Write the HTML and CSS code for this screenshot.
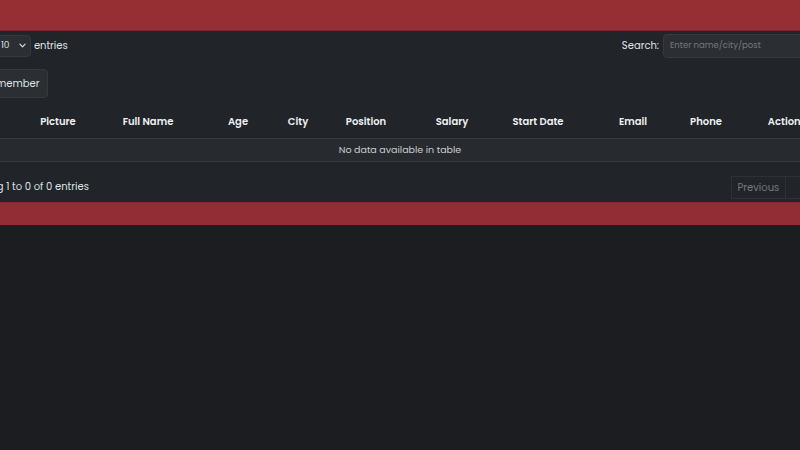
FILE: index.html
```html
<!doctype html>
<html lang="en">
  <head>
    <meta charset="UTF-8" />
    <meta name="viewport" content="width=device-width, initial-scale=1.0" />
    <title>Staff</title>
    <link rel="stylesheet" href="styles.css">
  </head>
  <body>
    <header class="topbar"></header>

    <main class="panel">
      <div class="wrap">
        <div class="table-top">
          <label class="length">
            Show
            <span class="select">10
              <svg width="7" height="7" viewBox="0 0 16 16"><path d="M2 5l6 6 6-6" fill="none" stroke="#dee2e6" stroke-width="2.6" stroke-linecap="round" stroke-linejoin="round"/></svg>
            </span>
            entries
          </label>
          <label class="search">
            Search:
            <input type="search" placeholder="Enter name/city/post" />
          </label>
        </div>

        <div class="actions-row">
          <button class="btn-add">Add member</button>
        </div>

        <table class="staff">
          <thead>
            <tr>
              <th class="c-id">ID</th>
              <th class="c-pic">Picture</th>
              <th class="c-name">Full Name</th>
              <th class="c-age">Age</th>
              <th class="c-city">City</th>
              <th class="c-pos">Position</th>
              <th class="c-sal">Salary</th>
              <th class="c-date">Start Date</th>
              <th class="c-mail">Email</th>
              <th class="c-phone">Phone</th>
              <th class="c-act">Actions</th>
            </tr>
          </thead>
          <tbody>
            <tr>
              <td colspan="11" class="empty">No data available in table</td>
            </tr>
          </tbody>
        </table>

        <div class="table-bottom">
          <div class="info">Showing 1 to 0 of 0 entries</div>
          <div class="pager">
            <span class="page disabled">Previous</span>
            <span class="page next disabled">Next</span>
          </div>
        </div>
      </div>
    </main>

    <footer class="bottombar"></footer>
  </body>
</html>
```

FILE: styles.css
```css
:root {
  --red: #952f34;
  --panel: #212429;
  --page: #1b1d21;
  --field: #2b2e33;
  --line: #363a40;
  --text: #dee2e6;
  --muted: #737980;
}

* {
  margin: 0;
  padding: 0;
  box-sizing: border-box;
}

body {
  font-family: "Poppins", Inter, "Noto Sans", sans-serif;
  font-size: 10px;
  color: var(--text);
  background-color: var(--page);
  overflow-x: hidden;
}

.topbar {
  height: 31px;
  background-color: var(--red);
  border-bottom: 1px solid #7e272c;
}

.bottombar {
  height: 23px;
  background-color: #922e33;
  border-top: 1px solid #862a2f;
}

.panel {
  background-color: var(--panel);
  display: flex;
  justify-content: center;
  overflow: hidden;
  padding: 3px 0 3px;
}

.wrap {
  width: 878px;
  flex-shrink: 0;
}

.table-top {
  display: flex;
  justify-content: space-between;
  align-items: center;
  height: 23px;
}

.length,
.search {
  display: flex;
  align-items: center;
  gap: 4px;
}

.length {
  gap: 3px;
}

.select {
  display: inline-flex;
  align-items: center;
  justify-content: space-between;
  width: 40px;
  height: 22px;
  padding: 0 4px 0 9px;
  font-size: 9px;
  background-color: var(--field);
  border: 1px solid var(--line);
  border-radius: 4px;
}

.search input {
  width: 176px;
  height: 24px;
  padding: 0 6px;
  font-family: inherit;
  font-size: 8.5px;
  color: var(--text);
  background-color: var(--field);
  border: 1px solid var(--line);
  border-radius: 4px;
  outline: none;
}

.search input::placeholder {
  color: var(--muted);
}

.actions-row {
  margin-top: 12px;
}

.btn-add {
  height: 29px;
  padding: 0 8px 0 11px;
  font-family: inherit;
  font-size: 10px;
  color: var(--text);
  background-color: var(--field);
  border: 1px solid var(--line);
  border-radius: 4px;
}

.staff {
  width: 100%;
  margin-top: 9px;
  border-collapse: collapse;
  table-layout: fixed;
}

.staff th {
  height: 31px;
  font-weight: 600;
  text-align: center;
  color: #eef0f2;
  border-bottom: 1px solid var(--line);
}

.staff td {
  height: 23px;
  text-align: center;
  font-size: 9.5px;
  color: #c9ccd0;
  background-color: #272a2f;
  border-bottom: 1px solid var(--line);
}

.c-id { width: 52px; }
.c-pic { width: 90px; }
.c-name { width: 90px; }
.c-age { width: 75px; padding-left: 15px; }
.c-city { width: 64px; padding-right: 4px; }
.c-pos { width: 77px; padding-right: 9px; }
.c-sal { width: 86px; }
.c-date { width: 90px; padding-right: 4px; }
.c-mail { width: 85px; padding-left: 11px; }
.c-phone { width: 79px; padding-right: 7px; }
.c-act { width: 90px; padding-right: 14px; }

.table-bottom {
  display: flex;
  justify-content: space-between;
  align-items: center;
  margin-top: 14px;
}

.pager {
  display: flex;
}

.page {
  height: 23px;
  line-height: 21px;
  padding: 0 6px;
  border: 1px solid #2e3136;
  color: var(--muted);
}

.page + .page {
  border-left: none;
}

.next {
  padding: 0 10px 0 20px;
}
```
